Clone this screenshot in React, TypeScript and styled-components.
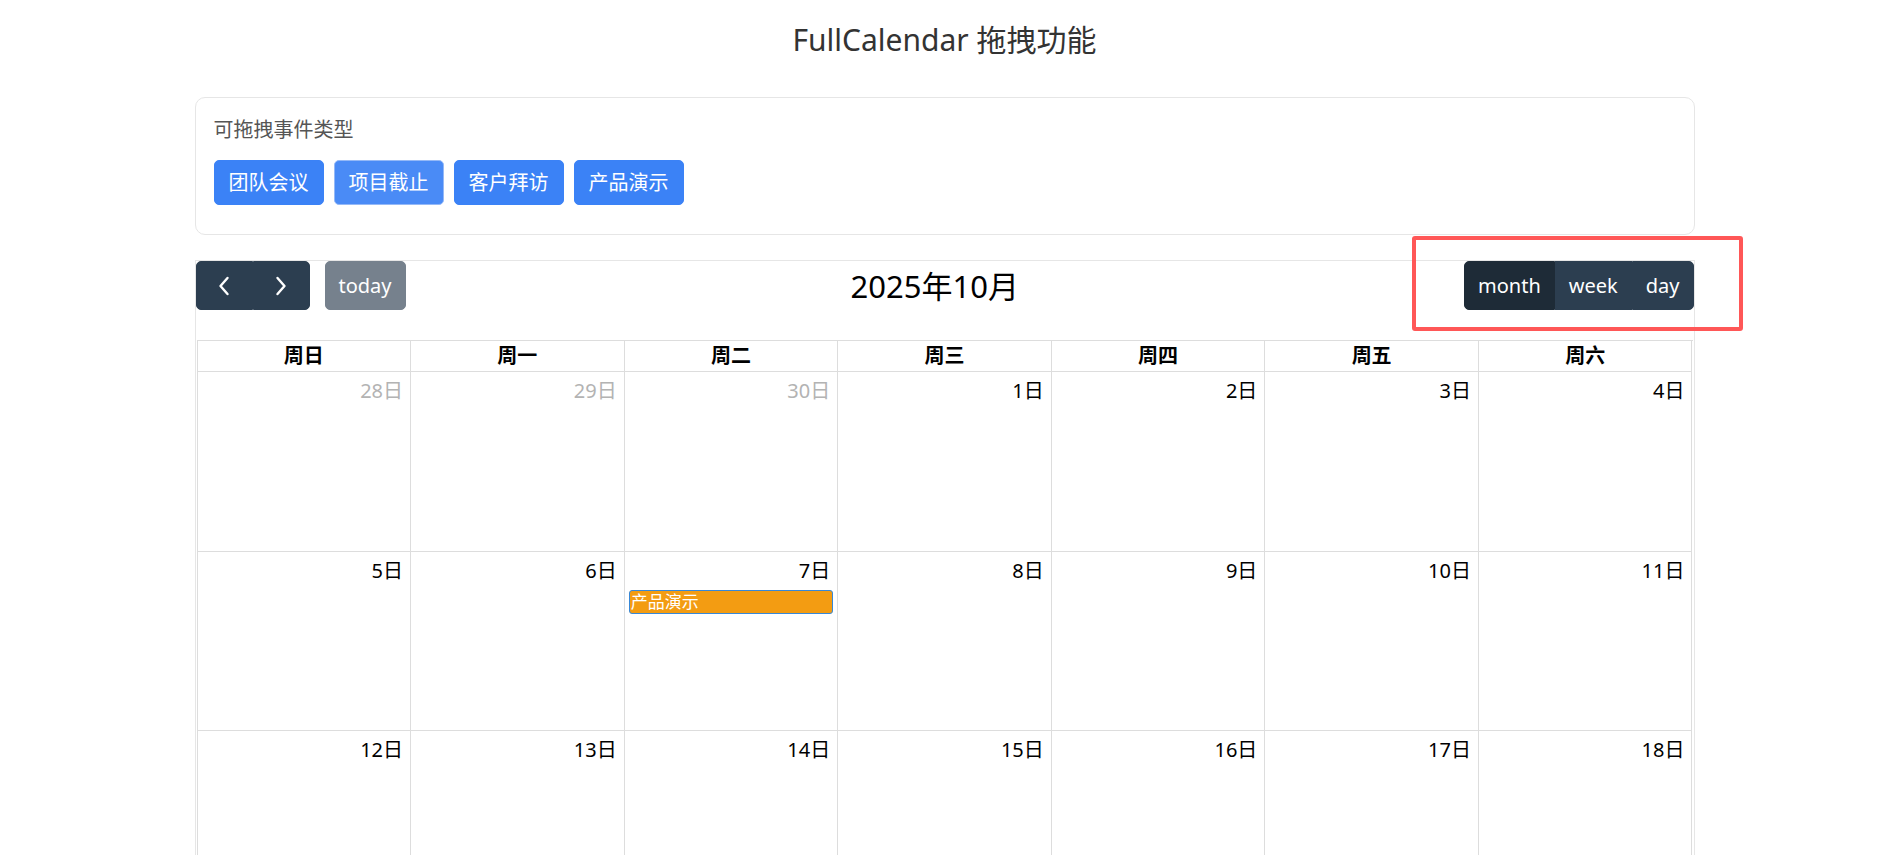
import React from "react";
import styled, { createGlobalStyle } from "styled-components";

const GlobalStyle = createGlobalStyle`
  html, body {
    margin: 0;
    padding: 0;
    background: #ffffff;
    scrollbar-width: none;
  }
  ::-webkit-scrollbar { display: none; }
  body {
    font-family: "Noto Sans", "Noto Sans CJK SC", sans-serif;
    color: #000;
  }
  * { box-sizing: border-box; }
`;

const Page = styled.div`
  width: 1500px;
  margin: 0 auto;
`;

const Title = styled.h1`
  margin: 0;
  padding-top: 22px;
  font-size: 30px;
  line-height: 36px;
  font-weight: 400;
  color: #333333;
  text-align: center;
`;

const Card = styled.section`
  margin-top: 39px;
  border: 1px solid #e6e6e6;
  border-radius: 10px;
  padding: 17px 18px 29px;
`;

const CardLabel = styled.div`
  font-size: 20px;
  line-height: 30px;
  color: #555555;
  margin-bottom: 15px;
`;

const ChipRow = styled.div`
  display: flex;
  gap: 10px;
`;

const Chip = styled.div<{ $hover?: boolean }>`
  width: 110px;
  height: 45px;
  display: flex;
  align-items: center;
  justify-content: center;
  background: #3b82f6;
  color: #ffffff;
  font-size: 20px;
  line-height: 30px;
  border-radius: 5px;
  border: 1px solid ${(p) => (p.$hover ? "#8db4f7" : "#3b82f6")};
  opacity: ${(p) => (p.$hover ? 0.92 : 1)};
`;

const Calendar = styled.section`
  margin-top: 25px;
  border: 1px solid #e6e6e6;
  border-bottom: none;
`;

const Toolbar = styled.div`
  display: flex;
  align-items: center;
  justify-content: space-between;
  margin-bottom: 30px;
`;

const Chunk = styled.div`
  display: flex;
  align-items: center;
  gap: 15px;
`;

const BtnGroup = styled.div`
  display: flex;
  position: relative;
`;

const Btn = styled.button<{ $bg: string; $first?: boolean; $last?: boolean; $w?: number }>`
  font-family: "Noto Sans", "Noto Sans CJK SC", sans-serif;
  font-size: 20px;
  line-height: 30px;
  height: 49px;
  padding: 0 13px;
  ${(p) => (p.$w ? `width: ${p.$w}px; padding-left: 0; padding-right: 0;` : "")}
  display: flex;
  align-items: center;
  justify-content: center;
  color: #ffffff;
  background: ${(p) => p.$bg};
  border: 1px solid ${(p) => p.$bg};
  margin: 0;
  border-radius: ${(p) =>
    `${p.$first ? 5 : 0}px ${p.$last ? 5 : 0}px ${p.$last ? 5 : 0}px ${p.$first ? 5 : 0}px`};
  cursor: pointer;
`;

const CalTitle = styled.h2`
  margin: 0;
  font-size: 31px;
  line-height: 42px;
  font-weight: 400;
  color: #000;
`;

const Annotation = styled.div`
  position: absolute;
  top: -25px;
  left: -52px;
  width: 331px;
  height: 95px;
  border: 4px solid #ff5757;
  border-radius: 3px;
  pointer-events: none;
`;

const Grid = styled.div`
  margin: 0 1px;
  display: grid;
  grid-template-columns: repeat(7, 1fr);
  border-top: 1px solid #dddddd;
  border-left: 1px solid #dddddd;
`;

const HeadCell = styled.div`
  height: 31px;
  border-right: 1px solid #dddddd;
  border-bottom: 1px solid #dddddd;
  font-size: 20px;
  line-height: 30px;
  font-weight: 700;
  text-align: center;
  color: #000;
`;

const DayCell = styled.div`
  height: 179.5px;
  border-right: 1px solid #dddddd;
  border-bottom: 1px solid #dddddd;
  display: flex;
  flex-direction: column;
`;

const DayNum = styled.div<{ $other?: boolean }>`
  text-align: right;
  padding: 4px 7px 4px 4px;
  font-size: 20px;
  line-height: 30px;
  color: ${(p) => (p.$other ? "#b3b3b3" : "#000000")};
`;

const EventBar = styled.div`
  margin: 0 4px;
  height: 24px;
  background: #f39c12;
  border: 1px solid #3788d8;
  border-radius: 3px;
  color: #ffffff;
  font-size: 17px;
  line-height: 22px;
  padding-left: 1px;
  white-space: nowrap;
  overflow: hidden;
`;

const Chevron = ({ dir }: { dir: "left" | "right" }) => (
  <svg width="12" height="20" viewBox="0 0 12 20" fill="none">
    <polyline
      points={dir === "left" ? "9.5,2 2.5,10 9.5,18" : "2.5,2 9.5,10 2.5,18"}
      stroke="#ffffff"
      strokeWidth="2.4"
      strokeLinecap="round"
      strokeLinejoin="round"
    />
  </svg>
);

const heads = ["周日", "周一", "周二", "周三", "周四", "周五", "周六"];

type Day = { n: number; other: boolean; event?: string };

const buildDays = (): Day[] => {
  const days: Day[] = [];
  [28, 29, 30].forEach((n) => days.push({ n, other: true }));
  for (let n = 1; n <= 31; n++) days.push({ n, other: false, event: n === 7 ? "产品演示" : undefined });
  for (let n = 1; n <= 8; n++) days.push({ n, other: true });
  return days;
};

export default function App() {
  const days = buildDays();
  return (
    <>
      <GlobalStyle />
      <Page>
        <Title>FullCalendar 拖拽功能</Title>
        <Card>
          <CardLabel>可拖拽事件类型</CardLabel>
          <ChipRow>
            <Chip>团队会议</Chip>
            <Chip $hover>项目截止</Chip>
            <Chip>客户拜访</Chip>
            <Chip>产品演示</Chip>
          </ChipRow>
        </Card>
        <Calendar>
          <Toolbar>
            <Chunk>
              <BtnGroup>
                <Btn $bg="#2c3e50" $first $w={57} aria-label="prev">
                  <Chevron dir="left" />
                </Btn>
                <Btn $bg="#2c3e50" $last $w={57} aria-label="next">
                  <Chevron dir="right" />
                </Btn>
              </BtnGroup>
              <Btn $bg="#76818d" $first $last>
                today
              </Btn>
            </Chunk>
            <CalTitle>2025年10月</CalTitle>
            <Chunk>
              <BtnGroup>
                <Btn $bg="#1e2b37" $first>
                  month
                </Btn>
                <Btn $bg="#2c3e50">week</Btn>
                <Btn $bg="#2c3e50" $last>
                  day
                </Btn>
                <Annotation />
              </BtnGroup>
            </Chunk>
          </Toolbar>
          <Grid>
            {heads.map((h) => (
              <HeadCell key={h}>{h}</HeadCell>
            ))}
            {days.map((d, i) => (
              <DayCell key={i}>
                <DayNum $other={d.other}>{d.n}日</DayNum>
                {d.event && <EventBar>{d.event}</EventBar>}
              </DayCell>
            ))}
          </Grid>
        </Calendar>
      </Page>
    </>
  );
}
